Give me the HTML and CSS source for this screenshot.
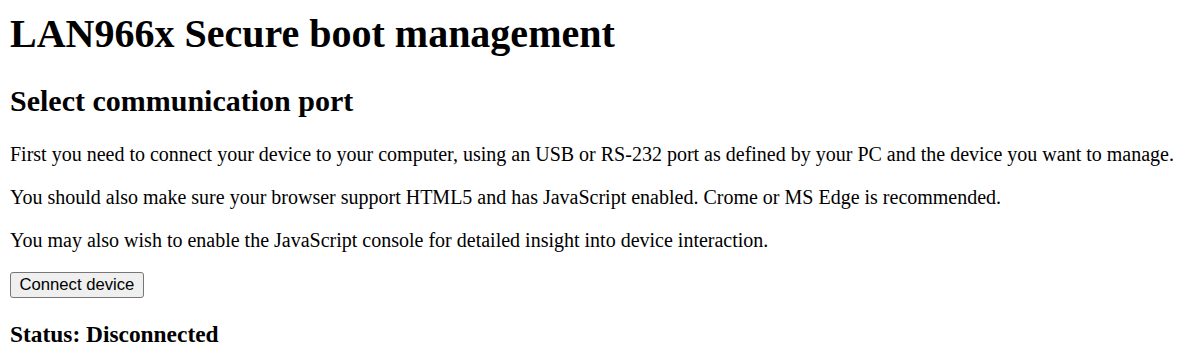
FILE: index.html
```html
<!DOCTYPE html>
<html lang="en">
<head>
<meta charset="utf-8">
<title>LAN966x Secure boot management</title>
<link rel="stylesheet" href="styles.css">
</head>
<body class="page">
<h1 class="title">LAN966x Secure boot management</h1>
<h2 class="subtitle">Select communication port</h2>
<p class="text">First you need to connect your device to your computer, using an USB or RS-232 port as defined by your PC and the device you want to manage.</p>
<p class="text">You should also make sure your browser support HTML5 and has JavaScript enabled. Crome or MS Edge is recommended.</p>
<p class="text">You may also wish to enable the JavaScript console for detailed insight into device interaction.</p>
<button class="btn" type="button">Connect device</button>
<h3 class="status">Status: Disconnected</h3>
</body>
</html>
```
FILE: styles.css
```css
.page {
  margin: 10px 10px 0;
  font-family: "Liberation Serif", "Times New Roman", serif;
  font-size: 20px;
  color: #000;
  background: #fff;
}
.title {
  font-size: 40px;
  font-weight: bold;
  margin: 0 0 26.8px;
}
.subtitle {
  font-size: 30px;
  font-weight: bold;
  margin: 24.9px 0;
}
.text {
  margin: 20px 0;
}
.btn {
  font-family: "Liberation Sans", Arial, sans-serif;
  font-size: 16.67px;
  line-height: 19px;
  padding: 2.5px 8.5px;
  border: 1px solid #767676;
  border-radius: 3px;
  background: #efefef;
  color: #000;
  vertical-align: top;
}
.status {
  font-size: 23.4px;
  font-weight: bold;
  margin: 23.4px 0 0;
}
```
